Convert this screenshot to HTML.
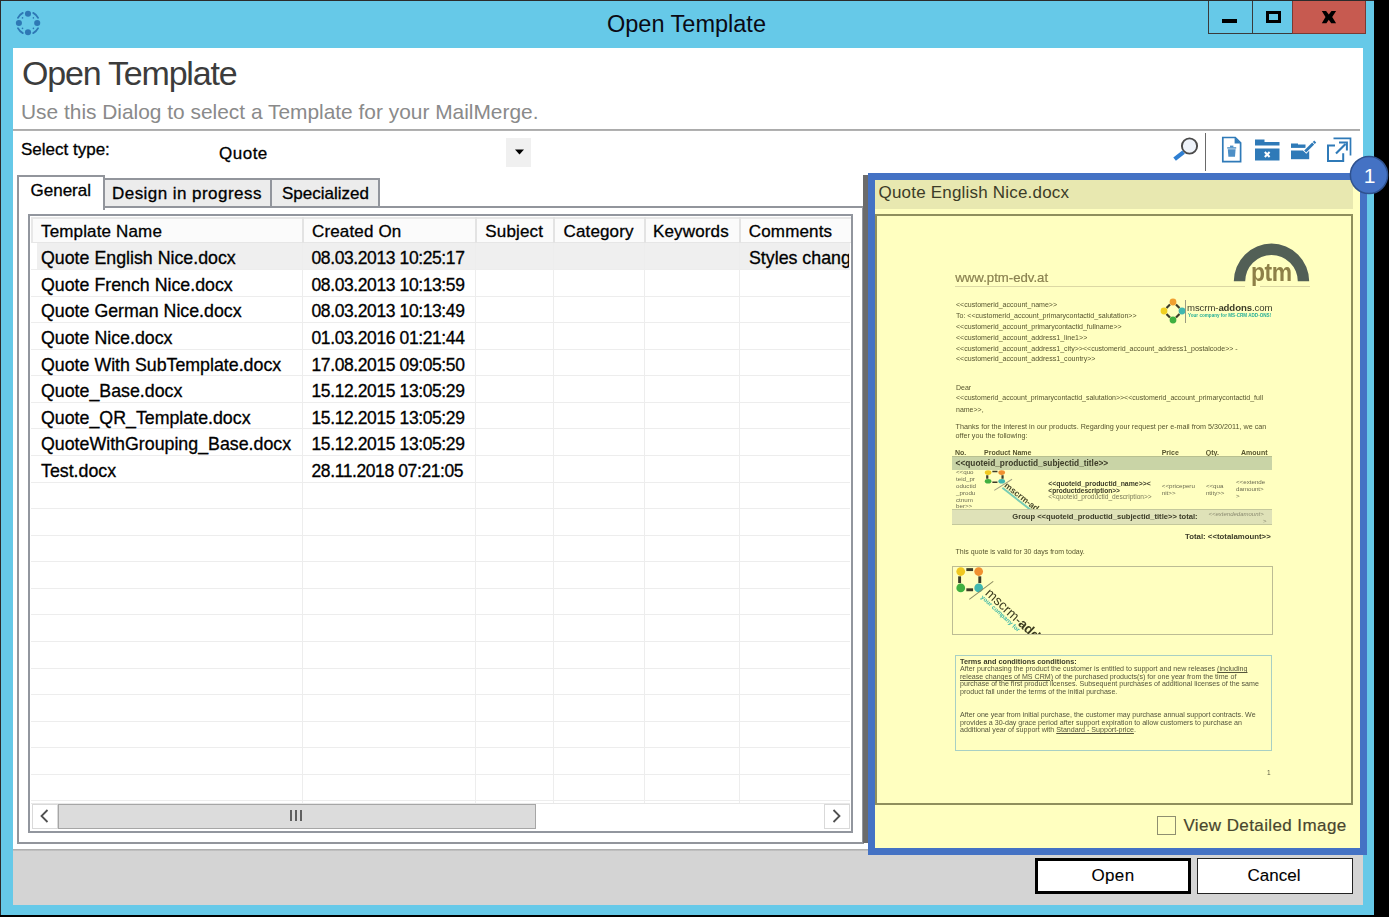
<!DOCTYPE html><html><head><meta charset="utf-8"><style>
html,body{margin:0;padding:0;}
body{width:1389px;height:917px;position:relative;overflow:hidden;background:#000;font-family:"Liberation Sans",sans-serif;}
.t{position:absolute;white-space:nowrap;}
.b{position:absolute;box-sizing:border-box;}
svg{position:absolute;}
</style></head><body>
<div class="b" style="left:0px;top:0px;width:1374px;height:915px;background:#2b2b2b;"></div>
<div class="b" style="left:1px;top:1px;width:1373px;height:914px;background:#66c9e8;"></div>
<div class="b" style="left:13px;top:48px;width:1350px;height:856px;background:#ffffff;"></div>
<div class="b" style="left:13px;top:849px;width:1350px;height:2px;background:linear-gradient(#a9a9a9,#c6c6c6);"></div>
<div class="b" style="left:13px;top:851px;width:1350px;height:54px;background:#d4d4d4;"></div>
<svg style="left:14.1px;top:9.2px" width="28" height="28" viewBox="0 0 28 28"><g fill="#2e78b5"><circle cx="14" cy="4.8" r="3.05"/><circle cx="14" cy="23.3" r="3.05"/><circle cx="4.9" cy="14" r="3.05"/><circle cx="23.2" cy="14" r="3.05"/><circle cx="8.5" cy="8.9" r="0.8"/><circle cx="19.4" cy="8.9" r="0.8"/><circle cx="8.5" cy="19.4" r="0.8"/><circle cx="19.4" cy="19.4" r="0.8"/></g><g fill="none" stroke="#2e78b5" stroke-width="1.8" stroke-linecap="round"><path d="M3.9 8.8 A11.4 11.4 0 0 1 8.8 3.9"/><path d="M19.2 3.9 A11.4 11.4 0 0 1 24.1 8.8"/><path d="M24.1 19.2 A11.4 11.4 0 0 1 19.2 24.1"/><path d="M8.8 24.1 A11.4 11.4 0 0 1 3.9 19.2"/></g></svg>
<div class="t" style="left:486.50px;width:400px;text-align:center;top:13.21px;font-size:23.5px;line-height:23.5px;color:#0a0a14;font-weight:400;letter-spacing:0px;">Open Template</div>
<div class="b" style="left:1208px;top:1px;width:45px;height:33px;border:1px solid #3a3a3a;border-top:none;background:#66c9e8;"></div>
<div class="b" style="left:1252px;top:1px;width:41px;height:33px;border:1px solid #3a3a3a;border-top:none;background:#66c9e8;"></div>
<div class="b" style="left:1292px;top:1px;width:74px;height:33px;border:1px solid #7a3a33;border-top:none;background:#c75a50;"></div>
<div class="b" style="left:1222px;top:19px;width:15px;height:4px;background:#000;"></div>
<div class="b" style="left:1266px;top:11px;width:15px;height:12px;border:3px solid #000;"></div>
<svg style="left:1320px;top:9px" width="18" height="16" viewBox="0 0 18 16"><path d="M1.8 1.9 L6.1 1.9 L8.8 5.4 L11.5 1.9 L16.1 1.9 L12.2 8.0 L16.1 14.3 L11.2 14.3 L8.8 10.7 L6.4 14.3 L1.8 14.3 L5.5 8.0 Z" fill="#000"/></svg>
<div class="t" style="left:22.00px;top:56.02px;font-size:34px;line-height:34px;color:#3c3c3c;font-weight:400;letter-spacing:-1.2px;">Open Template</div>
<div class="t" style="left:21.00px;top:102.31px;font-size:20.9px;line-height:20.9px;color:#8a8a8a;font-weight:400;letter-spacing:0px;">Use this Dialog to select a Template for your MailMerge.</div>
<div class="b" style="left:13px;top:129px;width:1347px;height:2px;background:linear-gradient(#a8a8a8,#b4b4b4);"></div>
<div class="t" style="left:21.00px;top:141.01px;font-size:17px;line-height:17px;color:#000;font-weight:400;letter-spacing:0px;-webkit-text-stroke:0.3px #000;">Select type:</div>
<div class="t" style="left:219.00px;top:145.01px;font-size:17px;line-height:17px;color:#000;font-weight:400;letter-spacing:0.5px;-webkit-text-stroke:0.3px #000;">Quote</div>
<div class="b" style="left:506px;top:138px;width:25px;height:29px;background:#f0f0f0;"></div>
<svg style="left:515px;top:149px" width="9" height="6" viewBox="0 0 9 6"><path d="M0 0.5 H9 L4.5 5.5 Z" fill="#000"/></svg>
<svg style="left:1170px;top:134px" width="32" height="30" viewBox="0 0 32 30"><circle cx="19.5" cy="12" r="7.6" fill="#eef3fa" stroke="#4a4a4a" stroke-width="1.9"/><path d="M13.6 18.2 L4.6 25.2" stroke="#2f7fd2" stroke-width="4.2" stroke-linecap="butt"/></svg>
<div class="b" style="left:1205px;top:133px;width:1px;height:38px;background:#6a6a6a;"></div>
<svg style="left:1220px;top:136px" width="24" height="28" viewBox="0 0 24 28"><path d="M2.8 1.5 H15.2 L20.6 6.9 V25.6 H2.8 Z" fill="#fff" stroke="#2f7ab8" stroke-width="1.7" stroke-linejoin="miter"/><path d="M14.6 1.5 V7.5 H20.6 Z" fill="#2f7ab8"/><g fill="#4d8fc6"><rect x="7.2" y="11.2" width="9" height="1.4"/><rect x="10" y="9.6" width="3.4" height="1.8"/><path d="M7.8 13.3 H15.6 L15 20.8 H8.4 Z"/></g></svg>
<svg style="left:1254px;top:138px" width="27" height="24" viewBox="0 0 27 24"><g fill="#2f7ab8"><rect x="1" y="1.5" width="9.5" height="2.5"/><rect x="1" y="4" width="24.5" height="3.5"/><rect x="1" y="10.5" width="24.5" height="12"/></g><path d="M10.8 14 L15.6 19 M15.6 14 L10.8 19" stroke="#fff" stroke-width="2"/></svg>
<svg style="left:1290px;top:138px" width="28" height="24" viewBox="0 0 28 24"><g fill="#2f7ab8"><rect x="1" y="5.5" width="7" height="2"/><rect x="1" y="6.5" width="14.5" height="3.4"/><rect x="1" y="12.5" width="18.2" height="8.7"/></g><path d="M14.6 14.2 L23.5 5.2" stroke="#fff" stroke-width="4.6"/><path d="M15.2 13.6 L23.2 5.5" stroke="#2f7ab8" stroke-width="2.8"/><path d="M23.8 4.9 L25.2 3.5" stroke="#2f7ab8" stroke-width="2.8"/><path d="M13.5 15.3 L14.6 14.2 L15.3 15 Z" fill="#2f7ab8"/></svg>
<svg style="left:1325px;top:135px" width="30" height="30" viewBox="0 0 30 30"><path d="M10 10.6 H3 V26 H18.2 V18.3" fill="none" stroke="#2f7ab8" stroke-width="2"/><path d="M8.5 3.3 H25.5 V20.5" fill="none" stroke="#2f7ab8" stroke-width="1.7"/><path d="M11 18.5 L20.5 9" stroke="#2f7ab8" stroke-width="2.2"/><path d="M14 7.6 H21.9 V15.4" fill="none" stroke="#2f7ab8" stroke-width="2"/></svg>
<div class="b" style="left:17px;top:206px;width:847px;height:638px;border:2px solid #92959c;background:#fff;"></div>
<div class="b" style="left:103px;top:178px;width:170px;height:30px;border:2px solid #92959c;background:#ececec;"></div>
<div class="b" style="left:270px;top:178px;width:110px;height:30px;border:2px solid #92959c;background:#ececec;"></div>
<div class="b" style="left:17px;top:175px;width:88px;height:35px;border:2px solid #92959c;border-bottom:none;background:#fff;"></div>
<div class="t" style="left:30.50px;top:181.91px;font-size:17px;line-height:17px;color:#000;font-weight:400;letter-spacing:0px;-webkit-text-stroke:0.3px #000;">General</div>
<div class="t" style="left:112.00px;top:184.91px;font-size:17px;line-height:17px;color:#000;font-weight:400;letter-spacing:0.45px;-webkit-text-stroke:0.3px #000;">Design in progress</div>
<div class="t" style="left:282.00px;top:184.91px;font-size:17px;line-height:17px;color:#000;font-weight:400;letter-spacing:0px;-webkit-text-stroke:0.3px #000;">Specialized</div>
<div class="b" style="left:28px;top:214px;width:825px;height:619px;border:2px solid #92969e;background:#fff;"></div>
<div class="b" style="left:31px;top:217px;width:820px;height:26px;background:#fbfbfb;border-top:2px solid #e8e8e8;border-left:2px solid #e8e8e8;border-bottom:1px solid #e6e6e6;"></div>
<div class="b" style="left:37px;top:243px;width:813px;height:26px;background:#efefef;"></div>
<div class="b" style="left:31px;top:269px;width:819px;height:1px;background:#ededed"></div>
<div class="b" style="left:31px;top:296px;width:819px;height:1px;background:#ededed"></div>
<div class="b" style="left:31px;top:322px;width:819px;height:1px;background:#ededed"></div>
<div class="b" style="left:31px;top:349px;width:819px;height:1px;background:#ededed"></div>
<div class="b" style="left:31px;top:375px;width:819px;height:1px;background:#ededed"></div>
<div class="b" style="left:31px;top:402px;width:819px;height:1px;background:#ededed"></div>
<div class="b" style="left:31px;top:428px;width:819px;height:1px;background:#ededed"></div>
<div class="b" style="left:31px;top:455px;width:819px;height:1px;background:#ededed"></div>
<div class="b" style="left:31px;top:482px;width:819px;height:1px;background:#ededed"></div>
<div class="b" style="left:31px;top:508px;width:819px;height:1px;background:#ededed"></div>
<div class="b" style="left:31px;top:535px;width:819px;height:1px;background:#ededed"></div>
<div class="b" style="left:31px;top:561px;width:819px;height:1px;background:#ededed"></div>
<div class="b" style="left:31px;top:588px;width:819px;height:1px;background:#ededed"></div>
<div class="b" style="left:31px;top:614px;width:819px;height:1px;background:#ededed"></div>
<div class="b" style="left:31px;top:641px;width:819px;height:1px;background:#ededed"></div>
<div class="b" style="left:31px;top:668px;width:819px;height:1px;background:#ededed"></div>
<div class="b" style="left:31px;top:694px;width:819px;height:1px;background:#ededed"></div>
<div class="b" style="left:31px;top:721px;width:819px;height:1px;background:#ededed"></div>
<div class="b" style="left:31px;top:747px;width:819px;height:1px;background:#ededed"></div>
<div class="b" style="left:31px;top:774px;width:819px;height:1px;background:#ededed"></div>
<div class="b" style="left:31px;top:800px;width:819px;height:1px;background:#ededed"></div>
<div class="b" style="left:302px;top:217px;width:2px;height:26px;background:#e3e3e3"></div>
<div class="b" style="left:302px;top:243px;width:1px;height:560px;background:#ededed"></div>
<div class="b" style="left:475px;top:217px;width:2px;height:26px;background:#e3e3e3"></div>
<div class="b" style="left:475px;top:243px;width:1px;height:560px;background:#ededed"></div>
<div class="b" style="left:553px;top:217px;width:2px;height:26px;background:#e3e3e3"></div>
<div class="b" style="left:553px;top:243px;width:1px;height:560px;background:#ededed"></div>
<div class="b" style="left:644px;top:217px;width:2px;height:26px;background:#e3e3e3"></div>
<div class="b" style="left:644px;top:243px;width:1px;height:560px;background:#ededed"></div>
<div class="b" style="left:739px;top:217px;width:2px;height:26px;background:#e3e3e3"></div>
<div class="b" style="left:739px;top:243px;width:1px;height:560px;background:#ededed"></div>
<div class="t" style="left:41.00px;top:222.81px;font-size:17px;line-height:17px;color:#000;font-weight:400;letter-spacing:0.15px;-webkit-text-stroke:0.3px #000;">Template Name</div>
<div class="t" style="left:312.00px;top:222.81px;font-size:17px;line-height:17px;color:#000;font-weight:400;letter-spacing:0.15px;-webkit-text-stroke:0.3px #000;">Created On</div>
<div class="t" style="left:485.30px;top:222.81px;font-size:17px;line-height:17px;color:#000;font-weight:400;letter-spacing:0.15px;-webkit-text-stroke:0.3px #000;">Subject</div>
<div class="t" style="left:563.50px;top:222.81px;font-size:17px;line-height:17px;color:#000;font-weight:400;letter-spacing:0.15px;-webkit-text-stroke:0.3px #000;">Category</div>
<div class="t" style="left:653.00px;top:222.81px;font-size:17px;line-height:17px;color:#000;font-weight:400;letter-spacing:0.15px;-webkit-text-stroke:0.3px #000;">Keywords</div>
<div class="t" style="left:748.80px;top:222.81px;font-size:17px;line-height:17px;color:#000;font-weight:400;letter-spacing:0.15px;-webkit-text-stroke:0.3px #000;">Comments</div>
<div class="t" style="left:41.00px;top:250.33px;font-size:17.8px;line-height:17.8px;color:#000;font-weight:400;letter-spacing:0px;-webkit-text-stroke:0.3px #000;">Quote English Nice.docx</div>
<div class="t" style="left:311.50px;top:250.29px;font-size:17.5px;line-height:17.5px;color:#000;font-weight:400;letter-spacing:-0.4px;-webkit-text-stroke:0.3px #000;">08.03.2013 10:25:17</div>
<div class="t" style="left:41.00px;top:276.90px;font-size:17.8px;line-height:17.8px;color:#000;font-weight:400;letter-spacing:0px;-webkit-text-stroke:0.3px #000;">Quote French Nice.docx</div>
<div class="t" style="left:311.50px;top:276.86px;font-size:17.5px;line-height:17.5px;color:#000;font-weight:400;letter-spacing:-0.4px;-webkit-text-stroke:0.3px #000;">08.03.2013 10:13:59</div>
<div class="t" style="left:41.00px;top:303.47px;font-size:17.8px;line-height:17.8px;color:#000;font-weight:400;letter-spacing:0px;-webkit-text-stroke:0.3px #000;">Quote German Nice.docx</div>
<div class="t" style="left:311.50px;top:303.43px;font-size:17.5px;line-height:17.5px;color:#000;font-weight:400;letter-spacing:-0.4px;-webkit-text-stroke:0.3px #000;">08.03.2013 10:13:49</div>
<div class="t" style="left:41.00px;top:330.04px;font-size:17.8px;line-height:17.8px;color:#000;font-weight:400;letter-spacing:0px;-webkit-text-stroke:0.3px #000;">Quote Nice.docx</div>
<div class="t" style="left:311.50px;top:330.00px;font-size:17.5px;line-height:17.5px;color:#000;font-weight:400;letter-spacing:-0.4px;-webkit-text-stroke:0.3px #000;">01.03.2016 01:21:44</div>
<div class="t" style="left:41.00px;top:356.61px;font-size:17.8px;line-height:17.8px;color:#000;font-weight:400;letter-spacing:0px;-webkit-text-stroke:0.3px #000;">Quote With SubTemplate.docx</div>
<div class="t" style="left:311.50px;top:356.57px;font-size:17.5px;line-height:17.5px;color:#000;font-weight:400;letter-spacing:-0.4px;-webkit-text-stroke:0.3px #000;">17.08.2015 09:05:50</div>
<div class="t" style="left:41.00px;top:383.18px;font-size:17.8px;line-height:17.8px;color:#000;font-weight:400;letter-spacing:0px;-webkit-text-stroke:0.3px #000;">Quote_Base.docx</div>
<div class="t" style="left:311.50px;top:383.14px;font-size:17.5px;line-height:17.5px;color:#000;font-weight:400;letter-spacing:-0.4px;-webkit-text-stroke:0.3px #000;">15.12.2015 13:05:29</div>
<div class="t" style="left:41.00px;top:409.75px;font-size:17.8px;line-height:17.8px;color:#000;font-weight:400;letter-spacing:0px;-webkit-text-stroke:0.3px #000;">Quote_QR_Template.docx</div>
<div class="t" style="left:311.50px;top:409.71px;font-size:17.5px;line-height:17.5px;color:#000;font-weight:400;letter-spacing:-0.4px;-webkit-text-stroke:0.3px #000;">15.12.2015 13:05:29</div>
<div class="t" style="left:41.00px;top:436.32px;font-size:17.8px;line-height:17.8px;color:#000;font-weight:400;letter-spacing:0px;-webkit-text-stroke:0.3px #000;">QuoteWithGrouping_Base.docx</div>
<div class="t" style="left:311.50px;top:436.28px;font-size:17.5px;line-height:17.5px;color:#000;font-weight:400;letter-spacing:-0.4px;-webkit-text-stroke:0.3px #000;">15.12.2015 13:05:29</div>
<div class="t" style="left:41.00px;top:462.89px;font-size:17.8px;line-height:17.8px;color:#000;font-weight:400;letter-spacing:0px;-webkit-text-stroke:0.3px #000;">Test.docx</div>
<div class="t" style="left:311.50px;top:462.85px;font-size:17.5px;line-height:17.5px;color:#000;font-weight:400;letter-spacing:-0.4px;-webkit-text-stroke:0.3px #000;">28.11.2018 07:21:05</div>
<div style="position:absolute;left:749px;top:0;width:100px;height:917px;overflow:hidden">
<div class="t" style="left:0px;top:250.13px;font-size:17.8px;line-height:17.8px;-webkit-text-stroke:0.3px #000">Styles changed</div>
</div>
<div class="b" style="left:31px;top:803px;width:819px;height:26px;background:#fff;border-top:1px solid #e8e8e8;"></div>
<div class="b" style="left:32px;top:804px;width:26px;height:25px;background:#fff;border:1px solid #d9d9d9;"></div>
<div class="b" style="left:58px;top:804px;width:478px;height:25px;background:#dcdcdc;border:1px solid #a6a6a6;"></div>
<div class="b" style="left:824px;top:804px;width:26px;height:25px;background:#fff;border:1px solid #d9d9d9;"></div>
<svg style="left:38px;top:808px" width="14" height="16" viewBox="0 0 14 16"><path d="M9.5 2 L3.5 8 L9.5 14" fill="none" stroke="#505050" stroke-width="1.8"/></svg>
<svg style="left:829px;top:808px" width="14" height="16" viewBox="0 0 14 16"><path d="M4.5 2 L10.5 8 L4.5 14" fill="none" stroke="#505050" stroke-width="1.8"/></svg>
<div class="b" style="left:290px;top:810px;width:2px;height:11px;background:#606060;"></div>
<div class="b" style="left:295px;top:810px;width:2px;height:11px;background:#606060;"></div>
<div class="b" style="left:300px;top:810px;width:2px;height:11px;background:#606060;"></div>
<div class="b" style="left:863px;top:175px;width:5px;height:668px;background:#6b6b6b;"></div>
<div class="b" style="left:868px;top:173px;width:499px;height:682px;background:#4472c4;"></div>
<div class="b" style="left:875px;top:180px;width:485px;height:668px;background:#ffffc0;"></div>
<div class="b" style="left:875px;top:180px;width:478px;height:29px;background:#e8e8b0;"></div>
<div class="t" style="left:878.50px;top:184.01px;font-size:17px;line-height:17px;color:#3c3c28;font-weight:400;letter-spacing:0.2px;">Quote English Nice.docx</div>
<div class="b" style="left:875px;top:214px;width:478px;height:591px;border:2px solid #8f8f5c;background:#ffffc0;"></div>
<div class="b" style="left:1157px;top:816px;width:19px;height:19px;border:1px solid #8f8f70;background:#ffffc0;"></div>
<div class="t" style="left:1183.40px;top:816.81px;font-size:17px;line-height:17px;color:#48462e;font-weight:400;letter-spacing:0.4px;-webkit-text-stroke:0.2px #48462e;">View Detailed Image</div>
<svg style="left:1348px;top:154px" width="42" height="42" viewBox="0 0 42 42"><circle cx="21" cy="21" r="18.6" fill="#4472c4" stroke="#2f528f" stroke-width="1.5"/></svg>
<div class="t" style="left:1354.50px;width:30px;text-align:center;top:165.22px;font-size:21px;line-height:21px;color:#fff;font-weight:400;letter-spacing:0px;">1</div>
<div class="b" style="left:1035px;top:858px;width:156px;height:36px;border:3px solid #000;background:#fff;"></div>
<div class="b" style="left:1197px;top:858px;width:156px;height:36px;border:1.5px solid #222;background:#fff;"></div>
<div class="t" style="left:1038.00px;width:150px;text-align:center;top:866.81px;font-size:17px;line-height:17px;color:#000;font-weight:400;letter-spacing:0.3px;-webkit-text-stroke:0.1px #000;">Open</div>
<div class="t" style="left:1199.00px;width:150px;text-align:center;top:866.81px;font-size:17px;line-height:17px;color:#000;font-weight:400;letter-spacing:0px;-webkit-text-stroke:0.1px #000;">Cancel</div>
<div style="position:absolute;left:0;top:0;width:1389px;height:917px;filter:blur(0.3px)">
<div class="t" style="left:955.30px;top:270.83px;font-size:13.2px;line-height:13.2px;color:#8a8150;font-weight:400;letter-spacing:0px;-webkit-text-stroke:0.2px #8a8150;">www.ptm-edv.at</div>
<div class="b" style="left:955px;top:286px;width:290px;height:1px;background:#dcd8a4;"></div>
<div class="b" style="left:1260px;top:286px;width:50px;height:1px;background:#dcd8a4;"></div>
<svg style="left:1230px;top:240px" width="84" height="50" viewBox="0 0 84 50"><path d="M3.8 41.3 A37.7 37.7 0 0 1 79.2 41.3 L67.8 41.3 A26.3 26.3 0 0 0 15.2 41.3 Z" fill="#525f56"/></svg>
<div class="t" style="left:1251px;top:259px;font-size:26px;line-height:26px;font-weight:700;color:#8e8048;transform:scaleX(0.88);transform-origin:0 0;letter-spacing:-0.5px">ptm</div>
<svg style="left:1159.3px;top:297.2px" width="28.0" height="28.0" viewBox="-14 -14 28 28"><g stroke="#3c3c28" stroke-width="2.2" fill="none"><path d="M-6.5 -3 L-3 -6.5"/><path d="M3 -6.5 L6.5 -3"/><path d="M6.5 3 L3 6.5"/><path d="M-3 6.5 L-6.5 3"/></g><circle cx="0" cy="-9" r="3.4" fill="#f0a030"/><circle cx="-9" cy="0" r="3.4" fill="#f0d020"/><circle cx="9" cy="0" r="3.4" fill="#40b8b0"/><circle cx="0" cy="9" r="3.4" fill="#40b040"/></svg>
<div class="b" style="left:1185px;top:300px;width:1px;height:23px;background:#9a9a80;"></div>
<div class="t" style="left:1187px;top:303px;font-size:9.6px;line-height:10px;color:#3c3c28;letter-spacing:-0.1px">mscrm-<b>addons</b>.com</div>
<div class="t" style="left:1188px;top:313px;font-size:4.6px;line-height:5px;color:#28b098;font-weight:700;">Your company for MS-CRM ADD-ONS!</div>
<div class="t" style="left:956.00px;top:301.24px;font-size:7.05px;line-height:7.05px;color:#57552f;font-weight:400;letter-spacing:0px;">&lt;&lt;customerid_account_name&gt;&gt;</div>
<div class="t" style="left:956.00px;top:312.14px;font-size:7.05px;line-height:7.05px;color:#57552f;font-weight:400;letter-spacing:0px;">To: &lt;&lt;customerid_account_primarycontactid_salutation&gt;&gt;</div>
<div class="t" style="left:956.00px;top:323.04px;font-size:7.05px;line-height:7.05px;color:#57552f;font-weight:400;letter-spacing:0px;">&lt;&lt;customerid_account_primarycontactid_fullname&gt;&gt;</div>
<div class="t" style="left:956.00px;top:334.04px;font-size:7.05px;line-height:7.05px;color:#57552f;font-weight:400;letter-spacing:0px;">&lt;&lt;customerid_account_address1_line1&gt;&gt;</div>
<div class="t" style="left:956.00px;top:344.54px;font-size:7.05px;line-height:7.05px;color:#57552f;font-weight:400;letter-spacing:0px;">&lt;&lt;customerid_account_address1_city&gt;&gt;&lt;&lt;customerid_account_address1_postalcode&gt;&gt; -</div>
<div class="t" style="left:956.00px;top:355.24px;font-size:7.05px;line-height:7.05px;color:#57552f;font-weight:400;letter-spacing:0px;">&lt;&lt;customerid_account_address1_country&gt;&gt;</div>
<div class="t" style="left:956.00px;top:383.66px;font-size:7px;line-height:7px;color:#57552f;font-weight:400;letter-spacing:0px;">Dear</div>
<div class="t" style="left:956.00px;top:394.36px;font-size:7px;line-height:7px;color:#57552f;font-weight:400;letter-spacing:0px;">&lt;&lt;customerid_account_primarycontactid_salutation&gt;&gt;&lt;&lt;customerid_account_primarycontactid_full</div>
<div class="t" style="left:956.00px;top:405.76px;font-size:7px;line-height:7px;color:#57552f;font-weight:400;letter-spacing:0px;">name&gt;&gt;,</div>
<div class="t" style="left:955.60px;top:422.85px;font-size:7.2px;line-height:7.2px;color:#57552f;font-weight:400;letter-spacing:0px;">Thanks for the interest in our products. Regarding your request per e-mail from 5/30/2011, we can</div>
<div class="t" style="left:955.60px;top:432.35px;font-size:7.2px;line-height:7.2px;color:#57552f;font-weight:400;letter-spacing:0px;">offer you the following:</div>
<div class="t" style="left:955.00px;top:449.26px;font-size:7px;line-height:7px;color:#57552f;font-weight:700;letter-spacing:0px;">No.</div>
<div class="t" style="left:984.00px;top:449.26px;font-size:7px;line-height:7px;color:#57552f;font-weight:700;letter-spacing:0px;">Product Name</div>
<div class="t" style="left:1161.70px;top:449.26px;font-size:7px;line-height:7px;color:#57552f;font-weight:700;letter-spacing:0px;">Price</div>
<div class="t" style="left:1205.80px;top:449.26px;font-size:7px;line-height:7px;color:#57552f;font-weight:700;letter-spacing:0px;">Qty.</div>
<div class="t" style="left:867.50px;width:400px;text-align:right;top:449.26px;font-size:7px;line-height:7px;color:#57552f;font-weight:700;letter-spacing:0px;">Amount</div>
<div class="b" style="left:952px;top:456px;width:320px;height:14px;background:#c9d4a6;border-top:1px solid #b8c090;"></div>
<div class="t" style="left:955.60px;top:459.12px;font-size:8.3px;line-height:8.3px;color:#3c3c28;font-weight:700;letter-spacing:0px;">&lt;&lt;quoteid_productid_subjectid_title&gt;&gt;</div>
<div class="t" style="left:956.00px;top:469.43px;font-size:6.2px;line-height:6.2px;color:#6a6a50;font-weight:400;letter-spacing:0px;">&lt;&lt;quo</div>
<div class="t" style="left:956.00px;top:476.23px;font-size:6.2px;line-height:6.2px;color:#6a6a50;font-weight:400;letter-spacing:0px;">teid_pr</div>
<div class="t" style="left:956.00px;top:482.93px;font-size:6.2px;line-height:6.2px;color:#6a6a50;font-weight:400;letter-spacing:0px;">oductid</div>
<div class="t" style="left:956.00px;top:489.93px;font-size:6.2px;line-height:6.2px;color:#6a6a50;font-weight:400;letter-spacing:0px;">_produ</div>
<div class="t" style="left:956.00px;top:496.73px;font-size:6.2px;line-height:6.2px;color:#6a6a50;font-weight:400;letter-spacing:0px;">ctnum</div>
<div class="t" style="left:956.00px;top:503.43px;font-size:6.2px;line-height:6.2px;color:#6a6a50;font-weight:400;letter-spacing:0px;">ber&gt;&gt;</div>
<div style="position:absolute;left:0;top:0;width:1389px;height:917px;transform-origin:0 0;transform:translate(995px,477px) scale(1,0.7) translate(-995px,-477px)">
<svg style="left:983.1px;top:465.1px" width="23.8" height="23.8" viewBox="-14 -14 28 28"><g stroke="#3c3c28" stroke-width="2.6" fill="none"><path d="M-3 -9 H3"/><path d="M9 -3 V3"/><path d="M3 9 H-3"/><path d="M-9 3 V-3"/></g><circle cx="-8" cy="-7.3" r="3.9" fill="#f0c820"/><circle cx="8" cy="-7.3" r="3.9" fill="#f09030"/><circle cx="8" cy="7.3" r="3.9" fill="#40b8b0"/><circle cx="-8" cy="7.3" r="3.9" fill="#40b040"/></svg>
</div>
<div style="position:absolute;left:975px;top:470px;width:70px;height:39px;overflow:hidden">
<div class="t" style="left:33px;top:11px;font-size:8.6px;line-height:8.6px;color:#4a4a2c;font-weight:700;transform:rotate(38deg);transform-origin:0 0;">mscrm-addons</div>
<div class="b" style="left:28px;top:17px;width:38px;height:2px;background:#78ccb4;transform:rotate(38deg);transform-origin:0 0;"></div>
<div class="b" style="left:19px;top:19.8px;width:21px;height:1px;background:#a0a080;transform:rotate(-32deg);transform-origin:0 0;"></div>
</div>
<div class="t" style="left:1048.30px;top:480.62px;font-size:6.9px;line-height:6.9px;color:#3c3c28;font-weight:700;letter-spacing:0px;">&lt;&lt;quoteid_productid_name&gt;&gt;&lt;</div>
<div class="t" style="left:1048.30px;top:487.50px;font-size:6.6px;line-height:6.6px;color:#3c3c28;font-weight:700;letter-spacing:0px;">&lt;productdescription&gt;&gt;</div>
<div class="t" style="left:1048.30px;top:494.40px;font-size:6.6px;line-height:6.6px;color:#7a7a5a;font-weight:400;letter-spacing:0px;">&lt;&lt;quoteid_productid_description&gt;&gt;</div>
<div class="t" style="left:1161.80px;top:483.43px;font-size:6.2px;line-height:6.2px;color:#6a6a50;font-weight:400;letter-spacing:0px;">&lt;&lt;priceperu</div>
<div class="t" style="left:1161.80px;top:489.63px;font-size:6.2px;line-height:6.2px;color:#6a6a50;font-weight:400;letter-spacing:0px;">nit&gt;&gt;</div>
<div class="t" style="left:1205.90px;top:483.43px;font-size:6.2px;line-height:6.2px;color:#6a6a50;font-weight:400;letter-spacing:0px;">&lt;&lt;qua</div>
<div class="t" style="left:1205.90px;top:489.63px;font-size:6.2px;line-height:6.2px;color:#6a6a50;font-weight:400;letter-spacing:0px;">ntity&gt;&gt;</div>
<div class="t" style="left:1236.00px;top:479.43px;font-size:6.2px;line-height:6.2px;color:#6a6a50;font-weight:400;letter-spacing:0px;">&lt;&lt;extende</div>
<div class="t" style="left:1236.00px;top:486.43px;font-size:6.2px;line-height:6.2px;color:#6a6a50;font-weight:400;letter-spacing:0px;">damount&gt;</div>
<div class="t" style="left:1236.00px;top:493.43px;font-size:6.2px;line-height:6.2px;color:#6a6a50;font-weight:400;letter-spacing:0px;">&gt;</div>
<div class="b" style="left:952px;top:509px;width:320px;height:16px;background:#dfe2b8;border-top:1px solid #c4c89c;border-bottom:1px solid #c4c89c;"></div>
<div class="t" style="left:1012.30px;top:513.22px;font-size:7.6px;line-height:7.6px;color:#3c3c28;font-weight:700;letter-spacing:0px;">Group &lt;&lt;quoteid_productid_subjectid_title&gt;&gt; total:</div>
<div class="t" style="left:1208.50px;top:510.74px;font-size:6px;line-height:6px;color:#8a8a70;font-weight:400;letter-spacing:0px;font-style:italic;">&lt;&lt;extendedamount&gt;</div>
<div class="t" style="left:1263.00px;top:517.54px;font-size:6px;line-height:6px;color:#8a8a70;font-weight:400;letter-spacing:0px;">&gt;</div>
<div class="t" style="left:870.70px;width:400px;text-align:right;top:532.50px;font-size:7.8px;line-height:7.8px;color:#3c3c28;font-weight:700;letter-spacing:0px;">Total: &lt;&lt;totalamount&gt;&gt;</div>
<div class="t" style="left:955.60px;top:548.36px;font-size:7px;line-height:7px;color:#57552f;font-weight:400;letter-spacing:0px;">This quote is valid for 30 days from today.</div>
<div class="b" style="left:952px;top:566px;width:321px;height:69px;border:1px solid #bcbc94;"></div>
<svg style="left:954.3px;top:563.8px" width="31.4" height="31.4" viewBox="-14 -14 28 28"><g stroke="#3c3c28" stroke-width="2.6" fill="none"><path d="M-3 -9 H3"/><path d="M9 -3 V3"/><path d="M3 9 H-3"/><path d="M-9 3 V-3"/></g><circle cx="-8" cy="-7.3" r="3.9" fill="#f0c820"/><circle cx="8" cy="-7.3" r="3.9" fill="#f09030"/><circle cx="8" cy="7.3" r="3.9" fill="#40b8b0"/><circle cx="-8" cy="7.3" r="3.9" fill="#40b040"/></svg>
<div style="position:absolute;left:953px;top:567px;width:319px;height:67px;overflow:hidden">
<div class="t" style="left:39px;top:18.5px;font-size:13.5px;line-height:13.5px;color:#3c3c20;transform:rotate(43deg);transform-origin:0 0;">mscrm-<b>addons</b></div>
<div class="t" style="left:31px;top:26.5px;font-size:6px;line-height:6px;font-weight:700;color:#40b8a8;transform:rotate(43deg);transform-origin:0 0;">your company for</div>
<div class="b" style="left:16.4px;top:32.3px;width:29.6px;height:1px;background:#8a8a60;transform:rotate(-37deg);transform-origin:0 0;"></div>
</div>
<div class="b" style="left:955px;top:655px;width:317px;height:96px;border:1px solid #a8d0c4;"></div>
<div class="t" style="left:960.00px;top:658.19px;font-size:7.3px;line-height:7.3px;color:#3c3c28;font-weight:700;letter-spacing:0px;">Terms and conditions conditions:</div>
<div class="t" style="left:960.00px;top:666.31px;font-size:7.1px;line-height:7.1px;color:#55553c;font-weight:400;letter-spacing:0px;">After purchasing the product the customer is entitled to support and new releases <u>(including</u></div>
<div class="t" style="left:960.00px;top:673.81px;font-size:7.1px;line-height:7.1px;color:#55553c;font-weight:400;letter-spacing:0px;"><u>release changes of MS CRM)</u> of the purchased products(s) for one year from the time of</div>
<div class="t" style="left:960.00px;top:681.31px;font-size:7.1px;line-height:7.1px;color:#55553c;font-weight:400;letter-spacing:0px;">purchase of the first product licenses. Subsequent purchases of additional licenses of the same</div>
<div class="t" style="left:960.00px;top:688.81px;font-size:7.1px;line-height:7.1px;color:#55553c;font-weight:400;letter-spacing:0px;">product fall under the terms of the initial purchase.</div>
<div class="t" style="left:960.00px;top:711.91px;font-size:7.1px;line-height:7.1px;color:#55553c;font-weight:400;letter-spacing:0px;">After one year from initial purchase, the customer may purchase annual support contracts. We</div>
<div class="t" style="left:960.00px;top:719.51px;font-size:7.1px;line-height:7.1px;color:#55553c;font-weight:400;letter-spacing:0px;">provides a 30-day grace period after support expiration to allow customers to purchase an</div>
<div class="t" style="left:960.00px;top:727.21px;font-size:7.1px;line-height:7.1px;color:#55553c;font-weight:400;letter-spacing:0px;">additional year of support with <u>Standard - Support-price</u>.</div>
<div class="t" style="left:1267.00px;top:770.25px;font-size:6.5px;line-height:6.5px;color:#5a5a40;font-weight:400;letter-spacing:0px;">1</div>
</div>
</body></html>
